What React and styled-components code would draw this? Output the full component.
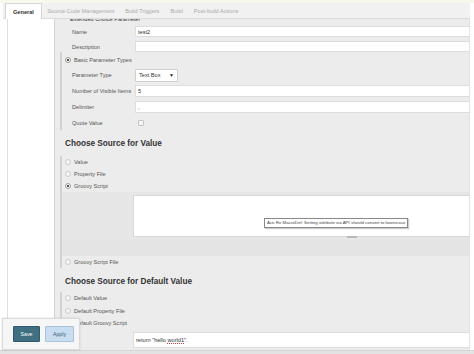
import styled, { createGlobalStyle } from "styled-components"

const GlobalStyle = createGlobalStyle`
    html, body {
        margin : 0;
        background : #ffffff;
        font-family : "Liberation Sans", Arial, sans-serif;
    }
`

const Page = styled.div`
    position : relative;
    width : 474px;
    height : 354px;
    overflow : hidden;
    background : #ffffff;
`
const TopStrip = styled.div`
    height : 3px;
    background : #f8f8ec;
`
const TabBar = styled.div`
    position : relative;
    z-index : 2;
    display : flex;
    align-items : flex-end;
    height : 16px;
    margin : 0 4px 0 3px;
    background : #f1f1f1;
    border-bottom : 1px solid #dcdcdc;
    box-sizing : border-box;
    padding-left : 2px;
`
const Tab = styled.div`
    display : flex;
    align-items : center;
    height : ${props => props.active ? "15px" : "14px"};
    padding : 0 ${props => props.active ? "7px" : "5.5px"};
    font-size : 5.6px;
    font-weight : ${props => props.active ? "bold" : "normal"};
    color : ${props => props.active ? "#333333" : "#aaaaaa"};
    background : ${props => props.active ? "#ffffff" : "transparent"};
    border : ${props => props.active ? "1px solid #d6d6d6" : "none"};
    border-bottom : none;
    margin-bottom : ${props => props.active ? "-1px" : "0"};
    white-space : nowrap;
`
const Body = styled.div`
    display : flex;
    margin-top : -6px;
    height : 337px;
`
const Side = styled.div`
    width : 46px;
    margin-left : 7px;
    background : #ffffff;
    border-left : 1px solid #e0e0e0;
    border-right : 1px solid #d4d4d4;
`
const Main = styled.div`
    flex : 1;
    margin-right : 4px;
    background : #ececec;
    border-right : 1px solid #e2e2e2;
`
const Legend = styled.div`
    height : 9px;
    line-height : 12px;
    padding-left : 15px;
    font-size : 5.6px;
    color : #333333;
    white-space : nowrap;
`
const Row = styled.div`
    display : grid;
    grid-template-columns : ${props => props.labelWidth}px 1fr;
    align-items : center;
    height : ${props => props.height}px;
    padding-left : ${props => props.indent}px;
    padding-top : ${props => props.top || 0}px;
    box-sizing : border-box;
`
const Label = styled.div`
    font-size : 5.6px;
    color : #555555;
    white-space : nowrap;
`
const Input = styled.div`
    height : ${props => props.height || 11}px;
    box-sizing : border-box;
    background : #ffffff;
    border : 1px solid #dddddd;
    border-right : none;
    font-size : 5.6px;
    color : #333333;
    display : flex;
    align-items : center;
    padding-left : 2px;
    white-space : pre;
`
const Select = styled.div`
    width : 43px;
    height : 13px;
    box-sizing : border-box;
    background : #ffffff;
    border : 1px solid #cfcfcf;
    border-radius : 1px;
    font-size : 5.6px;
    color : #333333;
    display : flex;
    align-items : center;
    justify-content : space-between;
    padding : 0 3px 0 3px;
`
const Arrow = styled.span`
    font-size : 5px;
    color : #222222;
`
const Check = styled.div`
    width : 4px;
    height : 4px;
    margin-left : 3px;
    border : 1px solid #c4c4c4;
    border-radius : 1px;
    background : #f4f4f4;
`
const Block = styled.div`
    margin-left : 5px;
    border-left : 2px solid #d2d2d2;
`
const RadioRow = styled.div`
    display : flex;
    align-items : center;
    gap : 3px;
    height : ${props => props.height}px;
    padding-left : 3px;
    font-size : 5.6px;
    color : #555555;
    white-space : nowrap;
`
const Radio = styled.span`
    width : 4px;
    height : 4px;
    border-radius : 50%;
    border : 1px solid ${props => props.checked ? "#a0a0a0" : "#cccccc"};
    background : ${props => props.checked ? "radial-gradient(circle, #555 0 1.2px, #f4f4f4 1.4px)" : "#f4f4f4"};
`
const Heading = styled.div`
    padding : ${props => props.pad};
    font-size : 8.2px;
    line-height : 10px;
    font-weight : bold;
    color : #333333;
    padding-left : 10px;
`
const ScriptRow = styled.div`
    display : grid;
    grid-template-columns : 71px 1fr;
    padding-top : 3px;
    background : #e6e6e6;
`
const ScriptArea = styled.div`
    position : relative;
    height : 42px;
    background : #ffffff;
    border : 1px solid #d8d8d8;
    border-right : none;
    box-sizing : border-box;
`
const Grip = styled.div`
    position : absolute;
    left : 213px;
    bottom : -2px;
    width : 10px;
    height : 2px;
    background : #b8b8b8;
`
const Tooltip = styled.div`
    position : absolute;
    left : 130px;
    top : 22px;
    padding : 0 2px;
    height : 8px;
    line-height : 8px;
    background : #ffffff;
    border : 1px solid #888888;
    box-shadow : 1px 1px 1px rgba(0,0,0,.2);
    font-size : 4.4px;
    color : #444444;
    white-space : nowrap;
`
const Band = styled.div`
    height : ${props => props.height}px;
    background : ${props => props.color};
`
const Squiggle = styled.span`
    text-decoration : underline dotted #d04040;
`
const BottomStrip = styled.div`
    height : 4px;
    background : #e3e3e3;
    border-top : 1px solid #d6d6d6;
    box-sizing : border-box;
`
const SaveBar = styled.div`
    position : absolute;
    left : 2px;
    top : 318px;
    width : 78px;
    height : 32px;
    box-sizing : border-box;
    display : flex;
    align-items : center;
    gap : 5px;
    padding-left : 10px;
    background : #f6f6f6;
    border : 1px solid #dadada;
    box-shadow : 0 0 2px rgba(0,0,0,.12);
`
const Button = styled.div`
    width : ${props => props.width}px;
    height : 16px;
    box-sizing : border-box;
    display : flex;
    align-items : center;
    justify-content : center;
    font-size : 5.2px;
    border-radius : 1px;
    background : ${props => props.primary ? "#3f6f80" : "#c8ddef"};
    color : ${props => props.primary ? "#ffffff" : "#3a5a78"};
    border : 1px solid ${props => props.primary ? "#2f5a6a" : "#a8c3da"};
`

const tabs = ["General", "Source Code Management", "Build Triggers", "Build", "Post-build Actions"]

export default function App(){
    return(
        <Page>
            <GlobalStyle/>
            <TopStrip/>
            <TabBar>
                {tabs.map((t, i) =>
                    <Tab key={t} active={i === 0}>{t}</Tab>
                )}
            </TabBar>
            <Body>
                <Side/>
                <Main>
                    <Legend>Extended Choice Parameter</Legend>
                    <Row labelWidth={63} indent={17} height={15} top={4}>
                        <Label>Name</Label>
                        <Input>test2</Input>
                    </Row>
                    <Row labelWidth={63} indent={17} height={15} top={4}>
                        <Label>Description</Label>
                        <Input/>
                    </Row>
                    <Block>
                        <RadioRow height={15}>
                            <Radio checked/>Basic Parameter Types
                        </RadioRow>
                        <Row labelWidth={63} indent={10} height={16}>
                            <Label>Parameter Type</Label>
                            <Select>Text Box<Arrow>▼</Arrow></Select>
                        </Row>
                        <Row labelWidth={63} indent={10} height={16}>
                            <Label>Number of Visible Items</Label>
                            <Input height={12}>5</Input>
                        </Row>
                        <Row labelWidth={63} indent={10} height={16}>
                            <Label>Delimiter</Label>
                            <Input height={12}>,</Input>
                        </Row>
                        <Row labelWidth={63} indent={10} height={15}>
                            <Label>Quote Value</Label>
                            <Check/>
                        </Row>
                    </Block>
                    <Heading pad="9px 0 7px">Choose Source for Value</Heading>
                    <Block>
                        <RadioRow height={12}><Radio/>Value</RadioRow>
                        <RadioRow height={12}><Radio/>Property File</RadioRow>
                        <RadioRow height={12}><Radio checked/>Groovy Script</RadioRow>
                        <ScriptRow>
                            <div/>
                            <ScriptArea>
                                <Tooltip>Ace Re MacroDef: Setting attribute via API should convert to lowercase</Tooltip>
                                <Grip/>
                            </ScriptArea>
                        </ScriptRow>
                        <Band height={3} color="#e6e6e6"/>
                        <Band height={16} color="#e4e4e4"/>
                        <RadioRow height={12}><Radio/>Groovy Script File</RadioRow>
                    </Block>
                    <Heading pad="9px 0 5px">Choose Source for Default Value</Heading>
                    <Block>
                        <RadioRow height={12.5}><Radio/>Default Value</RadioRow>
                        <RadioRow height={12.5}><Radio/>Default Property File</RadioRow>
                        <RadioRow height={12.5}><Radio/>Default Groovy Script</RadioRow>
                        <Row labelWidth={71} indent={0} height={20} top={1}>
                            <div/>
                            <Input height={16}>return "hello <Squiggle>world1</Squiggle>".</Input>
                        </Row>
                    </Block>
                </Main>
            </Body>
            <BottomStrip/>
            <SaveBar>
                <Button primary width={27}>Save</Button>
                <Button width={29}>Apply</Button>
            </SaveBar>
        </Page>
    )
}
